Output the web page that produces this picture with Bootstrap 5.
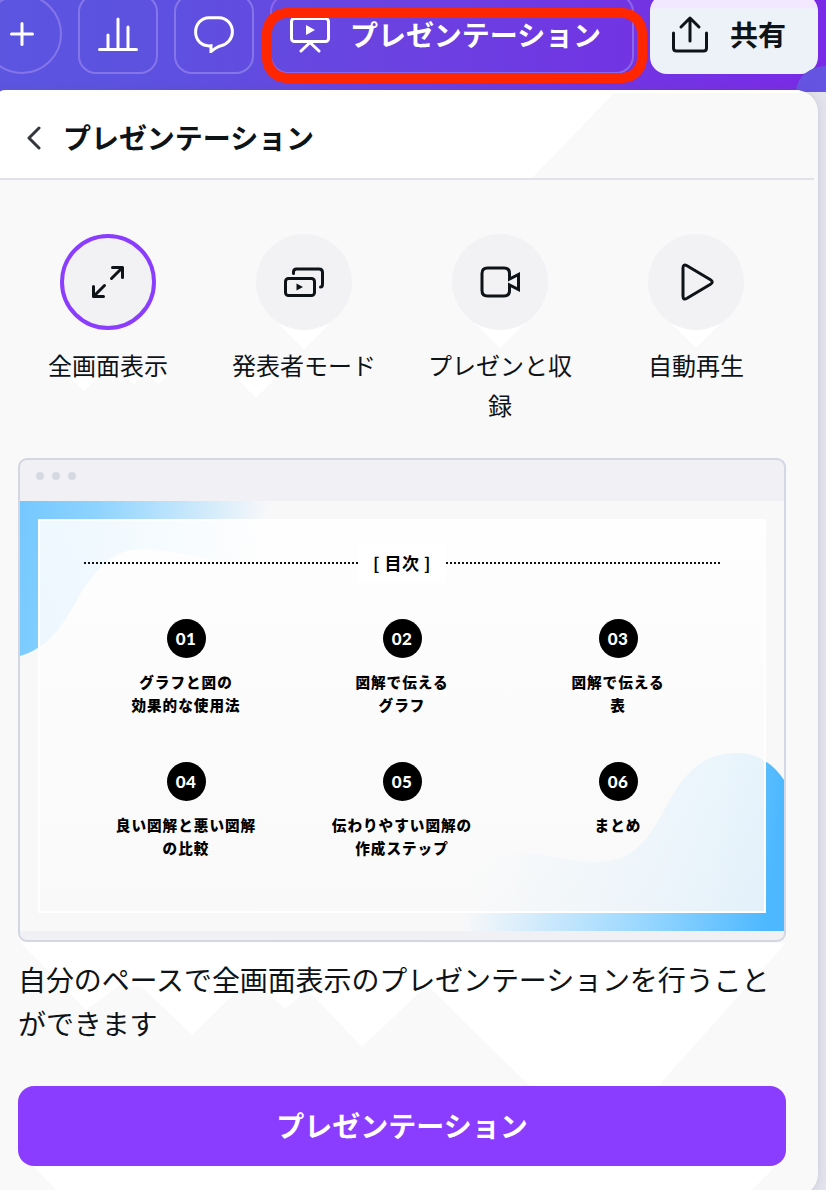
<!DOCTYPE html>
<html lang="ja">
<head>
<meta charset="utf-8">
<meta name="viewport" content="width=device-width, initial-scale=1">
<title>プレゼンテーション</title>
<link rel="stylesheet" href="https://cdn.jsdelivr.net/npm/bootstrap@5.3.0/dist/css/bootstrap.min.css">
<style>
body{width:826px;height:1190px;overflow:hidden;background:#e2e3ec;font-family:"Noto Sans CJK JP",sans-serif;color:#0e1318}
svg{display:block;flex-shrink:0}
.ic{fill:none;stroke:currentColor;stroke-width:3;stroke-linecap:round;stroke-linejoin:round}
.topbar{height:92px;padding-top:0;background:linear-gradient(90deg,#5b55e0 0,#5e50e0 22%,#6a43e0 45%,#7037e3 70%,#7a2ae6 100%);overflow:hidden}
.tools{margin:-6px 0 0 -18px;gap:16px}
.tool{height:80px;width:80px;border:2px solid #8476e8;border-radius:18px;color:#fff;background:none;padding:0}
.tool.round{border-radius:50%}
.tool-present{width:364px;border-color:#8b66ea;padding-left:18px}
.tool-share{width:168px;border:0;color:#0e1318;background:linear-gradient(#f2e8ff 0,#f2e8ff 13px,#edf1f8 15px);padding-left:20px;border-radius:17px}
.tl{font-size:28px;line-height:40px;font-weight:600;letter-spacing:-.05px}
.ring{left:262px;top:8px;width:385px;height:75px;border:10px solid #ff2600;border-radius:25px}
.blob{right:0;top:66px;width:30px;height:26px;background:#6553e2;border-top-left-radius:30px 26px}
.panel{margin-top:-2px;width:818px;height:1106px;background:#f9f9f9;border-radius:8px 22px 22px 0/2px 22px 22px 0;overflow:hidden;box-shadow:0 0 8px rgba(90,95,130,.18)}
.facets{left:0;top:0;z-index:0}
.panel>div{position:relative;z-index:1}
.phead{height:90px;width:814px;border-bottom:2px solid #dfe2e8;padding:6px 0 0 26px;gap:21px}
.modes{padding:54px 24px 0 10px;height:278px}
.mode{width:196px}
.disc{width:96px;height:96px;background:#f2f2f5;margin-bottom:15px}
.disc.on{border:4px solid #8b3dff}
.mode span{font-size:24px;line-height:40px;width:150px;text-align:center;font-weight:400}
.body-pad{padding:0 32px 0 18px}
.frame{height:484px;border:2px solid #d3d7e1;border-radius:9px;background:#f0f0f5;overflow:hidden}
.chrome{height:41px;gap:8px;padding:12px 0 0 16px}
.chrome i{width:8px;height:8px;border-radius:50%;background:#d5d9e2}
.slide{height:430px;background:#f8f8f9;padding:18px;color:#000}
.waves{left:0;top:0}
.sheet{height:394px;border:2px solid #fff;background:linear-gradient(rgba(255,255,255,.87),rgba(249,249,249,.87));padding:21px 44px 0}
.toc-head{height:42px}
.dots{height:2px;flex:1;background:repeating-linear-gradient(90deg,#111 0 2px,transparent 2px 4px)}
.toc-t{width:88px;height:40px;font-size:17px;font-weight:700;line-height:40px;letter-spacing:.6px;text-align:center;background:#fff}
.toc{display:grid;grid-template-columns:repeat(3,216px);grid-auto-rows:143px;margin:35px -6px 0}
.num{width:39px;height:39px;background:#000;color:#fff;font:900 17px/39px Lato,sans-serif;letter-spacing:.4px;text-align:center;margin-bottom:12px}
.cap{font-size:14.6px;font-weight:900;letter-spacing:1px;line-height:23px;text-align:center;white-space:nowrap}
.desc{font-size:28px;line-height:44px;font-weight:400;margin:15px 0 41px;letter-spacing:-.1px;white-space:nowrap}
.go{height:80px;background:#8b3dff;color:#fff;border:0;border-radius:16px;font-size:28px;font-weight:600;padding-bottom:3px}
</style>
</head>
<body>
<header class="topbar position-relative">
  <div class="tools d-flex">
    <button class="tool round d-flex align-items-center justify-content-center"><svg class="ic" width="26" height="26" viewBox="0 0 26 26"><path d="M13 2.500v21M2.500 13h21"/></svg></button>
    <button class="tool d-flex align-items-center justify-content-center"><svg class="ic" width="42" height="36" viewBox="0 0 42 36"><path d="M2.500 33.500h37M11 32V19M21 32V3M31 32V11"/></svg></button>
    <button class="tool d-flex align-items-center justify-content-center"><svg class="ic" width="40" height="38" viewBox="0 0 40 38"><path d="M15 2.800h10C33 2.800 38.400 9.500 38.400 17C38.400 24 33 29.500 27 30.800C23 31.500 20 34.500 17 36.500V30.800C8 31.800 1.600 25.500 1.600 17C1.600 9.500 7 2.800 15 2.800Z" stroke-linejoin="miter"/></svg></button>
    <button class="tool tool-present d-flex align-items-center"><svg class="ic" width="40" height="38" viewBox="0 0 40 38"><rect x="1.500" y="3.500" width="37" height="23" rx="3"/><path d="M20 27.500 11 36M20 27.500l9 8.500"/><path d="M16 10v10l9-5z" fill="currentColor" stroke="none"/></svg><span class="tl ms-3 ps-1">プレゼンテーション</span></button>
    <button class="tool tool-share d-flex align-items-center"><svg class="ic" width="40" height="38" viewBox="0 0 40 38"><path d="M3.500 18v15q0 3 3 3h27q3 0 3-3V18M20 26V3M11 12l9-9 9 9"/></svg><span class="tl ms-3 ps-1">共有</span></button>
  </div>
  <div class="ring position-absolute"></div>
  <div class="blob position-absolute"></div>
</header>
<main class="panel position-relative">
  <svg class="facets position-absolute" width="818" height="1106" viewBox="0 90 818 1106" fill="#fff"><path d="M0 90H617L531 179H0ZM600 90h200v3H600zM263 307l41 43 41-43zM459 307l41 41 41-41zM655 307l41 41 41-41zM70 377l14 14 14-14zM123 375l11 9 11-9zM148 375l10 9 10-9zM235 377l21 21 21-21zM20 942 86 1010 120 985 142 987 192 1035 240 988 262 987 285 1009 308 990 362 1047 427 985 531 1087H657L786 943ZM32 1164 56 1190H752L778 1164Z"/></svg>
  <div class="phead d-flex align-items-center"><svg class="ic" width="16" height="26" viewBox="0 0 16 26"><path d="M13 4 3 14l10 10" stroke="#33363b"/></svg><span class="tl">プレゼンテーション</span></div>
  <div class="modes d-flex align-items-start">
    <div class="mode d-flex flex-column align-items-center"><div class="disc on rounded-circle d-flex align-items-center justify-content-center"><svg class="ic" width="34" height="34" viewBox="0 0 34 34"><path d="M20.500 13.500 31.500 2.500M21.500 2.500h10v10M13.500 20.500l-11 11M2.500 21.500v10h10"/></svg></div><span>全画面表示</span></div>
    <div class="mode d-flex flex-column align-items-center"><div class="disc rounded-circle d-flex align-items-center justify-content-center"><svg class="ic" width="40" height="32" viewBox="0 0 40 32"><rect x="1.500" y="12.500" width="29" height="17" rx="3"/><path d="M9.500 7.500V6q0-3 3-3H35q3.500 0 3.500 3.500V18q0 3-2 3"/><path d="M12.500 17.500v7l6.500-3.500z" fill="currentColor" stroke="none"/></svg></div><span>発表者モード</span></div>
    <div class="mode d-flex flex-column align-items-center"><div class="disc rounded-circle d-flex align-items-center justify-content-center"><svg class="ic" width="40" height="34" viewBox="0 0 40 34"><path d="M7.500 3H24q5.500 0 5.500 5.500v5.500l9-4.500v15l-9-4.500v5.500Q29.500 31 24 31H7.500Q2 31 2 25.500v-17Q2 3 7.500 3Z" stroke-linejoin="miter"/></svg></div><span>プレゼンと収録</span></div>
    <div class="mode d-flex flex-column align-items-center"><div class="disc rounded-circle d-flex align-items-center justify-content-center"><svg class="ic" width="36" height="38" viewBox="0 0 36 38"><path d="M5 5v28q0 4.500 4 2.300L32.500 21.300q3.500-2.300 0-4.600L9 2.800Q5 .5 5 5Z"/></svg></div><span>自動再生</span></div>
  </div>
  <div class="body-pad">
    <div class="frame">
      <div class="chrome d-flex"><i></i><i></i><i></i></div>
      <div class="slide position-relative">
        <svg class="waves position-absolute" width="764" height="430" viewBox="0 0 764 430">
          <defs>
            <linearGradient id="a" gradientUnits="userSpaceOnUse" x1="0" y1="20" x2="240" y2="60"><stop stop-color="#75c8ff"/><stop offset=".3" stop-color="#8dd3ff"/><stop offset="1" stop-color="#f8f8f9"/></linearGradient>
            <linearGradient id="b" gradientUnits="userSpaceOnUse" x1="764" y1="410" x2="450" y2="370"><stop offset=".05" stop-color="#4db8ff"/><stop offset=".45" stop-color="#9bd8ff"/><stop offset="1" stop-color="#f8f8f9"/></linearGradient>
          </defs>
          <path fill="url(#a)" d="M0 0H270V64C200 66 160 48 123 48C92 48 77 68 62 90C46 117 34 145 0 155Z"/>
          <path fill="url(#b)" d="M764 279C752 261 736 252 716 252C683 252 663 273 648 302C627 342 612 361 576 361C543 361 525 350 495 352C460 355 435 390 420 430H764Z"/>
        </svg>
        <div class="sheet position-relative">
          <div class="toc-head d-flex align-items-center"><div class="dots"></div><div class="toc-t">[ 目次 ]</div><div class="dots"></div></div>
          <div class="toc">
            <div class="d-flex flex-column align-items-center"><div class="num rounded-circle">01</div><div class="cap">グラフと図の<br>効果的な使用法</div></div>
            <div class="d-flex flex-column align-items-center"><div class="num rounded-circle">02</div><div class="cap">図解で伝える<br>グラフ</div></div>
            <div class="d-flex flex-column align-items-center"><div class="num rounded-circle">03</div><div class="cap">図解で伝える<br>表</div></div>
            <div class="d-flex flex-column align-items-center"><div class="num rounded-circle">04</div><div class="cap">良い図解と悪い図解<br>の比較</div></div>
            <div class="d-flex flex-column align-items-center"><div class="num rounded-circle">05</div><div class="cap">伝わりやすい図解の<br>作成ステップ</div></div>
            <div class="d-flex flex-column align-items-center"><div class="num rounded-circle">06</div><div class="cap">まとめ</div></div>
          </div>
        </div>
      </div>
    </div>
    <p class="desc">自分のペースで全画面表示のプレゼンテーションを行うこと<br>ができます</p>
    <button class="go w-100">プレゼンテーション</button>
  </div>
</main>
<script src="https://cdn.jsdelivr.net/npm/bootstrap@5.3.0/dist/js/bootstrap.bundle.min.js"></script>
</body>
</html>
